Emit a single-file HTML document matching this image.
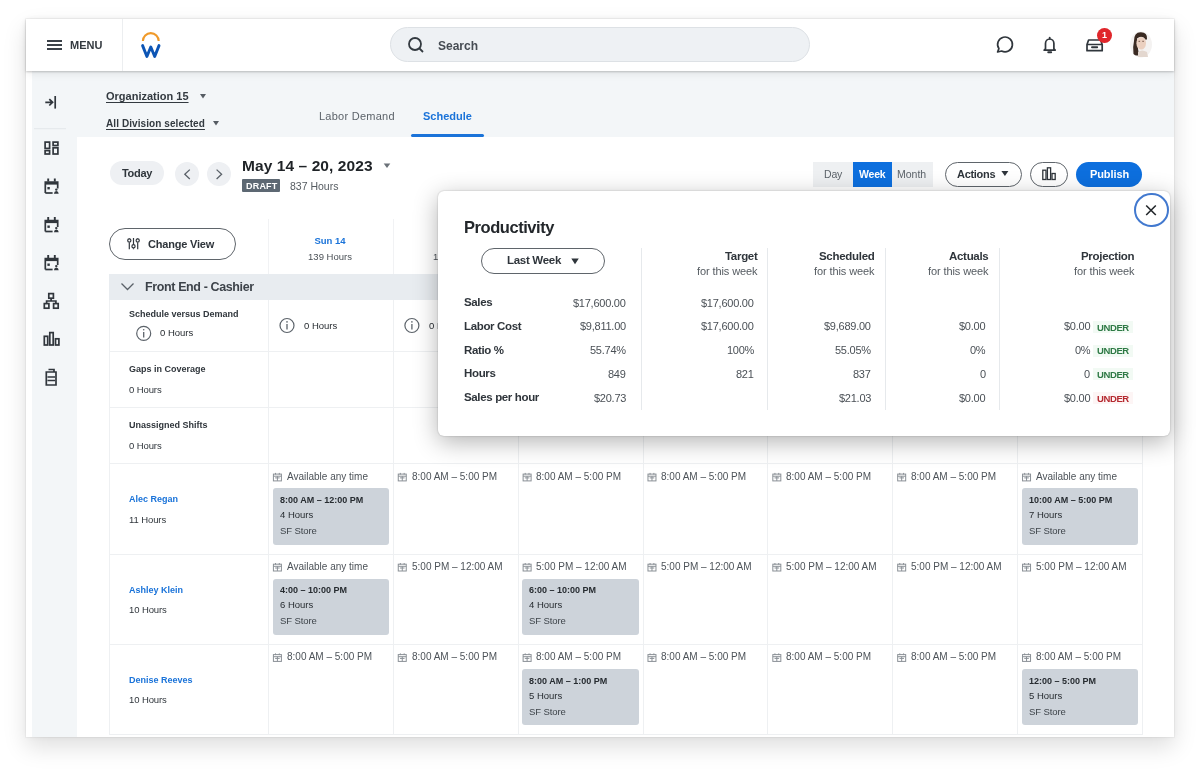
<!DOCTYPE html>
<html><head><meta charset="utf-8">
<style>
*{box-sizing:border-box;margin:0;padding:0}
html,body{width:1200px;height:770px;overflow:hidden;background:#fff;font-family:"Liberation Sans",sans-serif;color:#333}
.a{position:absolute}
.win{position:absolute;left:26px;top:19px;width:1148px;height:718px;background:#fff;box-shadow:0 0 0 1px rgba(0,0,0,0.03),0 10px 22px rgba(0,0,0,0.13),0 0 6px rgba(0,0,0,0.04)}
.t{position:absolute;white-space:nowrap;line-height:1;will-change:transform}
.b{font-weight:bold}
svg{position:absolute;overflow:visible}
</style></head><body>
<div class="win"></div>
<!-- sidebar / topbar backgrounds -->
<div class="a" style="left:32px;top:71px;width:1142px;height:66px;background:#f3f6f8"></div>
<div class="a" style="left:32px;top:71px;width:45px;height:666px;background:#f3f6f8"></div>
<!-- header -->
<div class="a" style="left:26px;top:19px;width:1148px;height:52px;background:#fff;box-shadow:0 1px 2px rgba(0,0,0,0.2),0 3px 8px rgba(0,0,0,0.07)"></div>
<div class="a" style="left:47px;top:40px;width:15px;height:2px;background:#3b4148"></div>
<div class="a" style="left:47px;top:44px;width:15px;height:2px;background:#3b4148"></div>
<div class="a" style="left:47px;top:48px;width:15px;height:2px;background:#3b4148"></div>
<div class="t b" style="left:70px;top:40px;font-size:11px;color:#343a40">MENU</div>
<div class="a" style="left:122px;top:19px;width:1px;height:52px;background:#eceef0"></div>
<svg style="left:0;top:0" width="1" height="1">
  <path d="M142.9 41 A7.9 7.9 0 0 1 158.7 41" fill="none" stroke="#f09a2a" stroke-width="2.1"/>
  <path d="M142.6 45.6 L146.9 56.5 L150.8 47 L154.7 56.5 L159 45.6" fill="none" stroke="#0d55b5" stroke-width="2.9" stroke-linejoin="round" stroke-linecap="round"/>
</svg>
<div class="a" style="left:390px;top:27px;width:420px;height:35px;border-radius:18px;background:#eef1f4;border:1px solid #dde1e5"></div>
<svg style="left:407px;top:36px" width="18" height="18" viewBox="0 0 18 18"><circle cx="8" cy="8" r="6" fill="none" stroke="#333a40" stroke-width="1.8"/><path d="M12.5 12.5 L16 16" stroke="#333a40" stroke-width="1.8"/></svg>
<div class="t b" style="left:438px;top:39.5px;font-size:12px;color:#464c53">Search</div>
<svg style="left:0;top:0" width="1" height="1" fill="none" stroke="#30363c" stroke-width="1.7" stroke-linejoin="round" stroke-linecap="round">
  <path d="M997.6 52 L998.9 48.6 A7.4 7.4 0 1 1 1001.6 51 Z"/>
  <path d="M1045.5 48.8 V43.5 A4.2 4.5 0 0 1 1053.9 43.5 V48.8 L1055.2 50.2 H1044.2 Z"/>
  <path d="M1049.7 37.5 V38.8"/><path d="M1048.2 52.2 H1051.2" stroke-width="1.9"/>
  <path d="M1087 44.5 L1088.6 40 H1100.6 L1102.2 44.5 V50.7 H1087 Z M1087 44.5 H1102.2"/>
  <path d="M1092 47.3 H1097.2" stroke-width="1.9"/>
</svg>
<div class="a" style="left:1097px;top:27.8px;width:14.8px;height:14.8px;border-radius:50%;background:#e0262b;color:#fff;font-size:9px;font-weight:bold;text-align:center;line-height:15px">1</div>
<svg style="left:0;top:0" width="1" height="1">
  <ellipse cx="1141" cy="44.5" rx="11" ry="13" fill="#f4f2f1"/>
  <path d="M1134 41 Q1134 32 1141 32.3 Q1147.5 32.5 1147 39 L1146 40 Q1142 34.5 1137 38.5 Q1137.5 48 1139 55 Q1136 56.5 1133.5 54 Q1132.5 47 1134 41 Z" fill="#3a2a22"/>
  <ellipse cx="1141.2" cy="43.2" rx="4.8" ry="6.3" fill="#ebd0c0"/>
  <path d="M1138.5 41.3 h1.6 M1142.3 41.3 h1.6" stroke="#6b4c3e" stroke-width="0.9"/>
  <path d="M1138 52 Q1142 49 1147 52 L1148 57 H1138 Z" fill="#e3d7cf"/>
</svg>
<!-- sidebar icons -->
<svg style="left:0;top:0" width="80" height="400" viewBox="0 0 80 400" fill="none" stroke="#30363c" stroke-width="1.7">
  <path d="M45.3 102.3 H52.3 M49.3 99.1 L52.6 102.3 L49.3 105.5"/>
  <path d="M55.2 96 V108.6"/>
  <path d="M34 128.7 H66" stroke="#e3e7eb" stroke-width="1"/>
  <rect x="45.1" y="142.1" width="4.5" height="6.3"/><rect x="45.1" y="150.6" width="4.5" height="3.4"/>
  <rect x="53.1" y="142.1" width="4.8" height="3.4"/><rect x="53.1" y="147.8" width="4.8" height="6.2"/>
  <g id="cal">
    <path d="M45.3 193 V182 H57.7 V188.6"/><rect x="45.3" y="182" width="12.4" height="2.6" fill="#30363c" stroke="none"/><path d="M48.2 178.6 V181.5 M54.8 178.6 V181.5" stroke-width="1.9"/>
    <path d="M45.3 193 H52.6"/>
    <rect x="47.4" y="187" width="2.4" height="2.4" fill="#30363c" stroke="none"/>
    <circle cx="56.3" cy="189.6" r="1.2" fill="#30363c" stroke="none"/>
    <path d="M53.9 193.8 Q54.2 191 56.3 191 Q58.4 191 58.7 193.8 Z" fill="#30363c" stroke="none"/>
  </g>
  <use href="#cal" y="38.5"/>
  <use href="#cal" y="76.5"/>
  <rect x="48.8" y="293.6" width="4.6" height="4.6"/><rect x="44.3" y="303.6" width="4.6" height="4.6"/><rect x="53.6" y="303.6" width="4.6" height="4.6"/>
  <path d="M51.1 298.2 V301 M46.6 303.6 V301 H55.9 V303.6"/>
  <rect x="44.3" y="336.3" width="3.4" height="8.7"/><rect x="49.8" y="332.6" width="3.4" height="12.4"/><rect x="55.5" y="338.8" width="3.4" height="6.2"/>
  <path d="M46.3 372 H56 V385 H46.3 Z M48.5 369.5 H54 V372 M47.5 377 H55 M47.5 380.5 H55"/>
</svg>

<!-- topbar -->
<div class="t b" style="left:106px;top:91px;font-size:11px;color:#333a40;text-decoration:underline;text-underline-offset:2px">Organization 15</div>
<svg style="left:200px;top:93.5px" width="8" height="6"><path d="M0 0 H6 L3 4.5 Z" fill="#555c63"/></svg>
<div class="t b" style="left:106px;top:119px;font-size:10px;color:#333a40;letter-spacing:0.08px;text-decoration:underline;text-underline-offset:2px">All Division selected</div>
<svg style="left:212.5px;top:121px" width="8" height="6"><path d="M0 0 H6 L3 4.5 Z" fill="#555c63"/></svg>
<div class="t" style="left:319px;top:111px;font-size:11px;color:#5c636a;letter-spacing:0.25px">Labor Demand</div>
<div class="t b" style="left:423px;top:111px;font-size:11px;color:#1a73d9">Schedule</div>
<div class="a" style="left:411px;top:134px;width:73px;height:3px;background:#1a73d9;border-radius:2px"></div>

<!-- content white -->
<div class="a" style="left:77px;top:137px;width:1097px;height:600px;background:#fff"></div>
<!-- GRID START -->
<div class="a" style="left:110px;top:161px;width:54px;height:24px;border-radius:12px;background:#eef0f3"></div>
<div class="t" style="top:167.9px;font-size:11px;color:#2f353b;font-weight:bold;letter-spacing:-0.3px;left:122.3px;">Today</div>
<div class="a" style="left:175.4px;top:162px;width:24px;height:24px;border-radius:50%;background:#eef0f3"></div>
<div class="a" style="left:207.3px;top:162px;width:24px;height:24px;border-radius:50%;background:#eef0f3"></div>
<svg style="left:0;top:0" width="1" height="1"><path d="M189.8 169.6 L184.8 174.3 L189.8 179" fill="none" stroke="#5a6168" stroke-width="1.3"/><path d="M216.6 169.6 L221.6 174.3 L216.6 179" fill="none" stroke="#5a6168" stroke-width="1.3"/></svg>
<div class="t" style="top:158.4px;font-size:15.5px;color:#1f2327;font-weight:bold;letter-spacing:0.08px;left:242.4px;">May 14 – 20, 2023</div>
<svg style="left:0;top:0" width="1" height="1"><path d="M383.7 163.5 H390.3 L387 168 Z" fill="#6b7178"/></svg>
<div class="a" style="left:242px;top:179px;width:38px;height:13px;background:#5d6873;border-radius:1px"></div>
<div class="t" style="top:181.9px;font-size:9px;color:#fff;font-weight:bold;letter-spacing:0.2px;left:245.5px;">DRAFT</div>
<div class="t" style="top:181.1px;font-size:10.5px;color:#555b61;letter-spacing:0px;left:289.5px;">837 Hours</div>
<div class="a" style="left:813px;top:161.5px;width:120px;height:25.5px;background:#eef0f2"></div>
<div class="a" style="left:852.5px;top:161.5px;width:39.5px;height:25.5px;background:#0d6fde"></div>
<div class="t" style="top:169.0px;font-size:10.5px;color:#5c636a;letter-spacing:-0.2px;left:823.7px;">Day</div>
<div class="t" style="top:169.0px;font-size:10.5px;color:#fff;font-weight:bold;letter-spacing:-0.2px;left:858.5px;">Week</div>
<div class="t" style="top:169.0px;font-size:10.5px;color:#5c636a;letter-spacing:0px;left:897.0px;">Month</div>
<div class="a" style="left:945px;top:161.5px;width:76.5px;height:25.5px;border-radius:13px;border:1.4px solid #5f656b;background:#fff"></div>
<div class="t" style="top:168.9px;font-size:11px;color:#2f353b;font-weight:bold;letter-spacing:-0.3px;left:957.4px;">Actions</div>
<svg style="left:0;top:0" width="1" height="1"><path d="M1001.4 171 H1008.4 L1004.9 176 Z" fill="#2f353b"/></svg>
<div class="a" style="left:1030px;top:161.5px;width:37.5px;height:25.5px;border-radius:13px;border:1.4px solid #5f656b;background:#fff"></div>
<svg style="left:0;top:0" width="1" height="1" fill="none" stroke="#2f353b" stroke-width="1.3"><rect x="1042.8" y="170.2" width="3.2" height="9.3"/><rect x="1047.4" y="167.8" width="3.2" height="11.7"/><rect x="1052" y="173.5" width="3.2" height="6"/></svg>
<div class="a" style="left:1076px;top:161.5px;width:66px;height:25.5px;border-radius:13px;background:#0d6fde"></div>
<div class="t" style="top:168.9px;font-size:11px;color:#fff;font-weight:bold;letter-spacing:-0.1px;left:1089.6px;">Publish</div>
<div class="a" style="left:108.5px;top:227.7px;width:127px;height:32px;border-radius:16px;border:1.4px solid #5f656b;background:#fff"></div>
<svg style="left:0;top:0" width="1" height="1" fill="none" stroke="#30363c" stroke-width="1.2"><path d="M129.3 238 V238.6 M129.3 242.3 V249.3 M133.5 238 V244.5 M133.5 248.2 V249.3 M137.7 238 V238.6 M137.7 242.3 V249.3"/><circle cx="129.3" cy="240.4" r="1.6"/><circle cx="133.5" cy="246.3" r="1.6"/><circle cx="137.7" cy="240.4" r="1.6"/></svg>
<div class="t" style="top:238.8px;font-size:11px;color:#2f353b;font-weight:bold;letter-spacing:-0.2px;left:148.2px;">Change View</div>
<div class="a" style="left:268.0px;top:219px;width:1px;height:55px;background:#f1f2f4"></div>
<div class="a" style="left:392.9px;top:219px;width:1px;height:55px;background:#f1f2f4"></div>
<div class="a" style="left:517.7px;top:219px;width:1px;height:55px;background:#f1f2f4"></div>
<div class="a" style="left:642.6px;top:219px;width:1px;height:55px;background:#f1f2f4"></div>
<div class="a" style="left:767.4px;top:219px;width:1px;height:55px;background:#f1f2f4"></div>
<div class="a" style="left:892.3px;top:219px;width:1px;height:55px;background:#f1f2f4"></div>
<div class="a" style="left:1017.1px;top:219px;width:1px;height:55px;background:#f1f2f4"></div>
<div class="a" style="left:1142.0px;top:219px;width:1px;height:55px;background:#f1f2f4"></div>
<div class="t" style="top:235.9px;font-size:9.5px;color:#1a73d9;font-weight:bold;left:180.0px;width:300px;text-align:center;">Sun 14</div>
<div class="t" style="top:252.3px;font-size:9.5px;color:#4a5056;left:180.0px;width:300px;text-align:center;">139 Hours</div>
<div class="t" style="top:235.9px;font-size:9.5px;color:#1a73d9;font-weight:bold;left:305.3px;width:300px;text-align:center;">Mon 15</div>
<div class="t" style="top:252.3px;font-size:9.5px;color:#4a5056;left:305.3px;width:300px;text-align:center;">139 Hours</div>
<div class="t" style="top:235.9px;font-size:9.5px;color:#1a73d9;font-weight:bold;left:430.1px;width:300px;text-align:center;">Tue 16</div>
<div class="t" style="top:252.3px;font-size:9.5px;color:#4a5056;left:430.1px;width:300px;text-align:center;">119 Hours</div>
<div class="t" style="top:235.9px;font-size:9.5px;color:#1a73d9;font-weight:bold;left:555.0px;width:300px;text-align:center;">Wed 17</div>
<div class="t" style="top:252.3px;font-size:9.5px;color:#4a5056;left:555.0px;width:300px;text-align:center;">119 Hours</div>
<div class="t" style="top:235.9px;font-size:9.5px;color:#1a73d9;font-weight:bold;left:679.8px;width:300px;text-align:center;">Thu 18</div>
<div class="t" style="top:252.3px;font-size:9.5px;color:#4a5056;left:679.8px;width:300px;text-align:center;">119 Hours</div>
<div class="t" style="top:235.9px;font-size:9.5px;color:#1a73d9;font-weight:bold;left:804.7px;width:300px;text-align:center;">Fri 19</div>
<div class="t" style="top:252.3px;font-size:9.5px;color:#4a5056;left:804.7px;width:300px;text-align:center;">119 Hours</div>
<div class="t" style="top:235.9px;font-size:9.5px;color:#1a73d9;font-weight:bold;left:929.5px;width:300px;text-align:center;">Sat 20</div>
<div class="t" style="top:252.3px;font-size:9.5px;color:#4a5056;left:929.5px;width:300px;text-align:center;">119 Hours</div>
<div class="a" style="left:109px;top:274.2px;width:1033px;height:26px;background:#e8ecf0"></div>
<svg style="left:0;top:0" width="1" height="1"><path d="M121.5 283.5 L127.5 289.5 L133.5 283.5" fill="none" stroke="#5a6168" stroke-width="1.3"/></svg>
<div class="t" style="top:280.9px;font-size:12.5px;color:#3d434a;font-weight:bold;letter-spacing:-0.38px;left:145.0px;">Front End - Cashier</div>
<div class="a" style="left:109.0px;top:299.8px;width:1px;height:434.5px;background:#eef0f2"></div>
<div class="a" style="left:268.0px;top:299.8px;width:1px;height:434.5px;background:#eef0f2"></div>
<div class="a" style="left:392.9px;top:299.8px;width:1px;height:434.5px;background:#eef0f2"></div>
<div class="a" style="left:517.7px;top:299.8px;width:1px;height:434.5px;background:#eef0f2"></div>
<div class="a" style="left:642.6px;top:299.8px;width:1px;height:434.5px;background:#eef0f2"></div>
<div class="a" style="left:767.4px;top:299.8px;width:1px;height:434.5px;background:#eef0f2"></div>
<div class="a" style="left:892.3px;top:299.8px;width:1px;height:434.5px;background:#eef0f2"></div>
<div class="a" style="left:1017.1px;top:299.8px;width:1px;height:434.5px;background:#eef0f2"></div>
<div class="a" style="left:1142.0px;top:299.8px;width:1px;height:434.5px;background:#eef0f2"></div>
<div class="a" style="left:109px;top:351.2px;width:1033.5px;height:1px;background:#eef0f2"></div>
<div class="a" style="left:109px;top:406.8px;width:1033.5px;height:1px;background:#eef0f2"></div>
<div class="a" style="left:109px;top:463.4px;width:1033.5px;height:1px;background:#eef0f2"></div>
<div class="a" style="left:109px;top:553.5px;width:1033.5px;height:1px;background:#eef0f2"></div>
<div class="a" style="left:109px;top:643.9px;width:1033.5px;height:1px;background:#eef0f2"></div>
<div class="a" style="left:109px;top:734.3px;width:1033.5px;height:1px;background:#eef0f2"></div>
<div class="t" style="top:310.4px;font-size:9px;color:#30363c;font-weight:bold;left:128.7px;">Schedule versus Demand</div>
<div class="t" style="top:328.3px;font-size:9.5px;color:#262b30;letter-spacing:0px;left:160.0px;">0 Hours</div>
<svg style="left:0;top:0" width="1" height="1"><circle cx="143.7" cy="333.4" r="7" fill="none" stroke="#5c636a" stroke-width="1.2"/><path d="M143.7 331.9 V337.4" stroke="#5c636a" stroke-width="1.3"/><circle cx="143.7" cy="329.79999999999995" r="0.8" fill="#5c636a"/></svg>
<svg style="left:0;top:0" width="1" height="1"><circle cx="287.0" cy="325.5" r="7" fill="none" stroke="#5c636a" stroke-width="1.2"/><path d="M287.0 324.0 V329.5" stroke="#5c636a" stroke-width="1.3"/><circle cx="287.0" cy="321.9" r="0.8" fill="#5c636a"/></svg>
<div class="t" style="top:320.5px;font-size:9.5px;color:#262b30;letter-spacing:0px;left:303.8px;">0 Hours</div>
<svg style="left:0;top:0" width="1" height="1"><circle cx="411.9" cy="325.5" r="7" fill="none" stroke="#5c636a" stroke-width="1.2"/><path d="M411.9 324.0 V329.5" stroke="#5c636a" stroke-width="1.3"/><circle cx="411.9" cy="321.9" r="0.8" fill="#5c636a"/></svg>
<div class="t" style="top:320.5px;font-size:9.5px;color:#262b30;letter-spacing:0px;left:428.7px;">0 Hours</div>
<svg style="left:0;top:0" width="1" height="1"><circle cx="536.7" cy="325.5" r="7" fill="none" stroke="#5c636a" stroke-width="1.2"/><path d="M536.7 324.0 V329.5" stroke="#5c636a" stroke-width="1.3"/><circle cx="536.7" cy="321.9" r="0.8" fill="#5c636a"/></svg>
<div class="t" style="top:320.5px;font-size:9.5px;color:#262b30;letter-spacing:0px;left:553.5px;">0 Hours</div>
<svg style="left:0;top:0" width="1" height="1"><circle cx="661.6" cy="325.5" r="7" fill="none" stroke="#5c636a" stroke-width="1.2"/><path d="M661.6 324.0 V329.5" stroke="#5c636a" stroke-width="1.3"/><circle cx="661.6" cy="321.9" r="0.8" fill="#5c636a"/></svg>
<div class="t" style="top:320.5px;font-size:9.5px;color:#262b30;letter-spacing:0px;left:678.4px;">0 Hours</div>
<svg style="left:0;top:0" width="1" height="1"><circle cx="786.4" cy="325.5" r="7" fill="none" stroke="#5c636a" stroke-width="1.2"/><path d="M786.4 324.0 V329.5" stroke="#5c636a" stroke-width="1.3"/><circle cx="786.4" cy="321.9" r="0.8" fill="#5c636a"/></svg>
<div class="t" style="top:320.5px;font-size:9.5px;color:#262b30;letter-spacing:0px;left:803.2px;">0 Hours</div>
<svg style="left:0;top:0" width="1" height="1"><circle cx="911.3" cy="325.5" r="7" fill="none" stroke="#5c636a" stroke-width="1.2"/><path d="M911.3 324.0 V329.5" stroke="#5c636a" stroke-width="1.3"/><circle cx="911.3" cy="321.9" r="0.8" fill="#5c636a"/></svg>
<div class="t" style="top:320.5px;font-size:9.5px;color:#262b30;letter-spacing:0px;left:928.1px;">0 Hours</div>
<svg style="left:0;top:0" width="1" height="1"><circle cx="1036.1" cy="325.5" r="7" fill="none" stroke="#5c636a" stroke-width="1.2"/><path d="M1036.1 324.0 V329.5" stroke="#5c636a" stroke-width="1.3"/><circle cx="1036.1" cy="321.9" r="0.8" fill="#5c636a"/></svg>
<div class="t" style="top:320.5px;font-size:9.5px;color:#262b30;letter-spacing:0px;left:1052.9px;">0 Hours</div>
<div class="t" style="top:365.4px;font-size:9px;color:#30363c;font-weight:bold;left:128.7px;">Gaps in Coverage</div>
<div class="t" style="top:384.8px;font-size:9.5px;color:#30363c;letter-spacing:-0.1px;left:128.7px;">0 Hours</div>
<div class="t" style="top:421.4px;font-size:9px;color:#30363c;font-weight:bold;left:128.7px;">Unassigned Shifts</div>
<div class="t" style="top:440.9px;font-size:9.5px;color:#30363c;letter-spacing:-0.1px;left:128.7px;">0 Hours</div>
<div class="t" style="top:495.4px;font-size:9px;color:#1a73d9;font-weight:bold;left:128.7px;">Alec Regan</div>
<div class="t" style="top:514.8px;font-size:9.5px;color:#30363c;letter-spacing:-0.1px;left:128.7px;">11 Hours</div>
<svg style="left:0;top:0" width="1" height="1" fill="none" stroke="#8a9096" stroke-width="1"><rect x="273.4" y="474.09999999999997" width="8" height="6.8"/><path d="M273.4 476.2 H281.4 M275.5 472.9 V474.59999999999997 M279.29999999999995 472.9 V474.59999999999997 M275.09999999999997 477.9 H279.7 M277.4 476.2 V480.9" /></svg>
<div class="t" style="top:471.8px;font-size:10px;color:#4d5359;letter-spacing:0px;left:286.6px;">Available any time</div>
<div class="a" style="left:272.5px;top:488.4px;width:116.5px;height:56.5px;background:#cdd3da;border-radius:3px"></div>
<div class="t" style="top:496.0px;font-size:9px;color:#262b30;font-weight:bold;letter-spacing:0px;left:279.6px;">8:00 AM – 12:00 PM</div>
<div class="t" style="top:510.2px;font-size:9.5px;color:#262b30;letter-spacing:0px;left:279.6px;">4 Hours</div>
<div class="t" style="top:526.0px;font-size:9.5px;color:#3e444a;letter-spacing:-0.1px;left:279.6px;">SF Store</div>
<svg style="left:0;top:0" width="1" height="1" fill="none" stroke="#8a9096" stroke-width="1"><rect x="398.25699999999995" y="474.09999999999997" width="8" height="6.8"/><path d="M398.25699999999995 476.2 H406.25699999999995 M400.35699999999997 472.9 V474.59999999999997 M404.1569999999999 472.9 V474.59999999999997 M399.95699999999994 477.9 H404.55699999999996 M402.25699999999995 476.2 V480.9" /></svg>
<div class="t" style="top:471.8px;font-size:10px;color:#4d5359;letter-spacing:0px;left:411.5px;">8:00 AM – 5:00 PM</div>
<svg style="left:0;top:0" width="1" height="1" fill="none" stroke="#8a9096" stroke-width="1"><rect x="523.1139999999999" y="474.09999999999997" width="8" height="6.8"/><path d="M523.1139999999999 476.2 H531.1139999999999 M525.2139999999999 472.9 V474.59999999999997 M529.0139999999999 472.9 V474.59999999999997 M524.814 477.9 H529.4139999999999 M527.1139999999999 476.2 V480.9" /></svg>
<div class="t" style="top:471.8px;font-size:10px;color:#4d5359;letter-spacing:0px;left:536.3px;">8:00 AM – 5:00 PM</div>
<svg style="left:0;top:0" width="1" height="1" fill="none" stroke="#8a9096" stroke-width="1"><rect x="647.971" y="474.09999999999997" width="8" height="6.8"/><path d="M647.971 476.2 H655.971 M650.071 472.9 V474.59999999999997 M653.871 472.9 V474.59999999999997 M649.671 477.9 H654.271 M651.971 476.2 V480.9" /></svg>
<div class="t" style="top:471.8px;font-size:10px;color:#4d5359;letter-spacing:0px;left:661.2px;">8:00 AM – 5:00 PM</div>
<svg style="left:0;top:0" width="1" height="1" fill="none" stroke="#8a9096" stroke-width="1"><rect x="772.828" y="474.09999999999997" width="8" height="6.8"/><path d="M772.828 476.2 H780.828 M774.928 472.9 V474.59999999999997 M778.728 472.9 V474.59999999999997 M774.528 477.9 H779.1279999999999 M776.828 476.2 V480.9" /></svg>
<div class="t" style="top:471.8px;font-size:10px;color:#4d5359;letter-spacing:0px;left:786.0px;">8:00 AM – 5:00 PM</div>
<svg style="left:0;top:0" width="1" height="1" fill="none" stroke="#8a9096" stroke-width="1"><rect x="897.685" y="474.09999999999997" width="8" height="6.8"/><path d="M897.685 476.2 H905.685 M899.785 472.9 V474.59999999999997 M903.5849999999999 472.9 V474.59999999999997 M899.385 477.9 H903.9849999999999 M901.685 476.2 V480.9" /></svg>
<div class="t" style="top:471.8px;font-size:10px;color:#4d5359;letter-spacing:0px;left:910.9px;">8:00 AM – 5:00 PM</div>
<svg style="left:0;top:0" width="1" height="1" fill="none" stroke="#8a9096" stroke-width="1"><rect x="1022.542" y="474.09999999999997" width="8" height="6.8"/><path d="M1022.542 476.2 H1030.542 M1024.642 472.9 V474.59999999999997 M1028.442 472.9 V474.59999999999997 M1024.242 477.9 H1028.842 M1026.542 476.2 V480.9" /></svg>
<div class="t" style="top:471.8px;font-size:10px;color:#4d5359;letter-spacing:0px;left:1035.7px;">Available any time</div>
<div class="a" style="left:1021.6px;top:488.4px;width:116.5px;height:56.5px;background:#cdd3da;border-radius:3px"></div>
<div class="t" style="top:496.0px;font-size:9px;color:#262b30;font-weight:bold;letter-spacing:0px;left:1028.7px;">10:00 AM – 5:00 PM</div>
<div class="t" style="top:510.2px;font-size:9.5px;color:#262b30;letter-spacing:0px;left:1028.7px;">7 Hours</div>
<div class="t" style="top:526.0px;font-size:9.5px;color:#3e444a;letter-spacing:-0.1px;left:1028.7px;">SF Store</div>
<div class="t" style="top:585.5px;font-size:9px;color:#1a73d9;font-weight:bold;left:128.7px;">Ashley Klein</div>
<div class="t" style="top:604.9px;font-size:9.5px;color:#30363c;letter-spacing:-0.1px;left:128.7px;">10 Hours</div>
<svg style="left:0;top:0" width="1" height="1" fill="none" stroke="#8a9096" stroke-width="1"><rect x="273.4" y="564.2" width="8" height="6.8"/><path d="M273.4 566.3000000000001 H281.4 M275.5 563.0 V564.7 M279.29999999999995 563.0 V564.7 M275.09999999999997 568.0 H279.7 M277.4 566.3000000000001 V571.0" /></svg>
<div class="t" style="top:561.9px;font-size:10px;color:#4d5359;letter-spacing:0px;left:286.6px;">Available any time</div>
<div class="a" style="left:272.5px;top:578.5px;width:116.5px;height:56.5px;background:#cdd3da;border-radius:3px"></div>
<div class="t" style="top:586.1px;font-size:9px;color:#262b30;font-weight:bold;letter-spacing:0px;left:279.6px;">4:00 – 10:00 PM</div>
<div class="t" style="top:600.3px;font-size:9.5px;color:#262b30;letter-spacing:0px;left:279.6px;">6 Hours</div>
<div class="t" style="top:616.1px;font-size:9.5px;color:#3e444a;letter-spacing:-0.1px;left:279.6px;">SF Store</div>
<svg style="left:0;top:0" width="1" height="1" fill="none" stroke="#8a9096" stroke-width="1"><rect x="398.25699999999995" y="564.2" width="8" height="6.8"/><path d="M398.25699999999995 566.3000000000001 H406.25699999999995 M400.35699999999997 563.0 V564.7 M404.1569999999999 563.0 V564.7 M399.95699999999994 568.0 H404.55699999999996 M402.25699999999995 566.3000000000001 V571.0" /></svg>
<div class="t" style="top:561.9px;font-size:10px;color:#4d5359;letter-spacing:0px;left:411.5px;">5:00 PM – 12:00 AM</div>
<svg style="left:0;top:0" width="1" height="1" fill="none" stroke="#8a9096" stroke-width="1"><rect x="523.1139999999999" y="564.2" width="8" height="6.8"/><path d="M523.1139999999999 566.3000000000001 H531.1139999999999 M525.2139999999999 563.0 V564.7 M529.0139999999999 563.0 V564.7 M524.814 568.0 H529.4139999999999 M527.1139999999999 566.3000000000001 V571.0" /></svg>
<div class="t" style="top:561.9px;font-size:10px;color:#4d5359;letter-spacing:0px;left:536.3px;">5:00 PM – 12:00 AM</div>
<div class="a" style="left:522.2px;top:578.5px;width:116.5px;height:56.5px;background:#cdd3da;border-radius:3px"></div>
<div class="t" style="top:586.1px;font-size:9px;color:#262b30;font-weight:bold;letter-spacing:0px;left:529.3px;">6:00 – 10:00 PM</div>
<div class="t" style="top:600.3px;font-size:9.5px;color:#262b30;letter-spacing:0px;left:529.3px;">4 Hours</div>
<div class="t" style="top:616.1px;font-size:9.5px;color:#3e444a;letter-spacing:-0.1px;left:529.3px;">SF Store</div>
<svg style="left:0;top:0" width="1" height="1" fill="none" stroke="#8a9096" stroke-width="1"><rect x="647.971" y="564.2" width="8" height="6.8"/><path d="M647.971 566.3000000000001 H655.971 M650.071 563.0 V564.7 M653.871 563.0 V564.7 M649.671 568.0 H654.271 M651.971 566.3000000000001 V571.0" /></svg>
<div class="t" style="top:561.9px;font-size:10px;color:#4d5359;letter-spacing:0px;left:661.2px;">5:00 PM – 12:00 AM</div>
<svg style="left:0;top:0" width="1" height="1" fill="none" stroke="#8a9096" stroke-width="1"><rect x="772.828" y="564.2" width="8" height="6.8"/><path d="M772.828 566.3000000000001 H780.828 M774.928 563.0 V564.7 M778.728 563.0 V564.7 M774.528 568.0 H779.1279999999999 M776.828 566.3000000000001 V571.0" /></svg>
<div class="t" style="top:561.9px;font-size:10px;color:#4d5359;letter-spacing:0px;left:786.0px;">5:00 PM – 12:00 AM</div>
<svg style="left:0;top:0" width="1" height="1" fill="none" stroke="#8a9096" stroke-width="1"><rect x="897.685" y="564.2" width="8" height="6.8"/><path d="M897.685 566.3000000000001 H905.685 M899.785 563.0 V564.7 M903.5849999999999 563.0 V564.7 M899.385 568.0 H903.9849999999999 M901.685 566.3000000000001 V571.0" /></svg>
<div class="t" style="top:561.9px;font-size:10px;color:#4d5359;letter-spacing:0px;left:910.9px;">5:00 PM – 12:00 AM</div>
<svg style="left:0;top:0" width="1" height="1" fill="none" stroke="#8a9096" stroke-width="1"><rect x="1022.542" y="564.2" width="8" height="6.8"/><path d="M1022.542 566.3000000000001 H1030.542 M1024.642 563.0 V564.7 M1028.442 563.0 V564.7 M1024.242 568.0 H1028.842 M1026.542 566.3000000000001 V571.0" /></svg>
<div class="t" style="top:561.9px;font-size:10px;color:#4d5359;letter-spacing:0px;left:1035.7px;">5:00 PM – 12:00 AM</div>
<div class="t" style="top:675.9px;font-size:9px;color:#1a73d9;font-weight:bold;left:128.7px;">Denise Reeves</div>
<div class="t" style="top:695.3px;font-size:9.5px;color:#30363c;letter-spacing:-0.1px;left:128.7px;">10 Hours</div>
<svg style="left:0;top:0" width="1" height="1" fill="none" stroke="#8a9096" stroke-width="1"><rect x="273.4" y="654.6" width="8" height="6.8"/><path d="M273.4 656.7 H281.4 M275.5 653.4 V655.1 M279.29999999999995 653.4 V655.1 M275.09999999999997 658.4 H279.7 M277.4 656.7 V661.4" /></svg>
<div class="t" style="top:652.3px;font-size:10px;color:#4d5359;letter-spacing:0px;left:286.6px;">8:00 AM – 5:00 PM</div>
<svg style="left:0;top:0" width="1" height="1" fill="none" stroke="#8a9096" stroke-width="1"><rect x="398.25699999999995" y="654.6" width="8" height="6.8"/><path d="M398.25699999999995 656.7 H406.25699999999995 M400.35699999999997 653.4 V655.1 M404.1569999999999 653.4 V655.1 M399.95699999999994 658.4 H404.55699999999996 M402.25699999999995 656.7 V661.4" /></svg>
<div class="t" style="top:652.3px;font-size:10px;color:#4d5359;letter-spacing:0px;left:411.5px;">8:00 AM – 5:00 PM</div>
<svg style="left:0;top:0" width="1" height="1" fill="none" stroke="#8a9096" stroke-width="1"><rect x="523.1139999999999" y="654.6" width="8" height="6.8"/><path d="M523.1139999999999 656.7 H531.1139999999999 M525.2139999999999 653.4 V655.1 M529.0139999999999 653.4 V655.1 M524.814 658.4 H529.4139999999999 M527.1139999999999 656.7 V661.4" /></svg>
<div class="t" style="top:652.3px;font-size:10px;color:#4d5359;letter-spacing:0px;left:536.3px;">8:00 AM – 5:00 PM</div>
<div class="a" style="left:522.2px;top:668.9px;width:116.5px;height:56.5px;background:#cdd3da;border-radius:3px"></div>
<div class="t" style="top:676.5px;font-size:9px;color:#262b30;font-weight:bold;letter-spacing:0px;left:529.3px;">8:00 AM – 1:00 PM</div>
<div class="t" style="top:690.7px;font-size:9.5px;color:#262b30;letter-spacing:0px;left:529.3px;">5 Hours</div>
<div class="t" style="top:706.5px;font-size:9.5px;color:#3e444a;letter-spacing:-0.1px;left:529.3px;">SF Store</div>
<svg style="left:0;top:0" width="1" height="1" fill="none" stroke="#8a9096" stroke-width="1"><rect x="647.971" y="654.6" width="8" height="6.8"/><path d="M647.971 656.7 H655.971 M650.071 653.4 V655.1 M653.871 653.4 V655.1 M649.671 658.4 H654.271 M651.971 656.7 V661.4" /></svg>
<div class="t" style="top:652.3px;font-size:10px;color:#4d5359;letter-spacing:0px;left:661.2px;">8:00 AM – 5:00 PM</div>
<svg style="left:0;top:0" width="1" height="1" fill="none" stroke="#8a9096" stroke-width="1"><rect x="772.828" y="654.6" width="8" height="6.8"/><path d="M772.828 656.7 H780.828 M774.928 653.4 V655.1 M778.728 653.4 V655.1 M774.528 658.4 H779.1279999999999 M776.828 656.7 V661.4" /></svg>
<div class="t" style="top:652.3px;font-size:10px;color:#4d5359;letter-spacing:0px;left:786.0px;">8:00 AM – 5:00 PM</div>
<svg style="left:0;top:0" width="1" height="1" fill="none" stroke="#8a9096" stroke-width="1"><rect x="897.685" y="654.6" width="8" height="6.8"/><path d="M897.685 656.7 H905.685 M899.785 653.4 V655.1 M903.5849999999999 653.4 V655.1 M899.385 658.4 H903.9849999999999 M901.685 656.7 V661.4" /></svg>
<div class="t" style="top:652.3px;font-size:10px;color:#4d5359;letter-spacing:0px;left:910.9px;">8:00 AM – 5:00 PM</div>
<svg style="left:0;top:0" width="1" height="1" fill="none" stroke="#8a9096" stroke-width="1"><rect x="1022.542" y="654.6" width="8" height="6.8"/><path d="M1022.542 656.7 H1030.542 M1024.642 653.4 V655.1 M1028.442 653.4 V655.1 M1024.242 658.4 H1028.842 M1026.542 656.7 V661.4" /></svg>
<div class="t" style="top:652.3px;font-size:10px;color:#4d5359;letter-spacing:0px;left:1035.7px;">8:00 AM – 5:00 PM</div>
<div class="a" style="left:1021.6px;top:668.9px;width:116.5px;height:56.5px;background:#cdd3da;border-radius:3px"></div>
<div class="t" style="top:676.5px;font-size:9px;color:#262b30;font-weight:bold;letter-spacing:0px;left:1028.7px;">12:00 – 5:00 PM</div>
<div class="t" style="top:690.7px;font-size:9.5px;color:#262b30;letter-spacing:0px;left:1028.7px;">5 Hours</div>
<div class="t" style="top:706.5px;font-size:9.5px;color:#3e444a;letter-spacing:-0.1px;left:1028.7px;">SF Store</div>
<!-- POPUP START -->
<div class="a" style="left:438.2px;top:190.5px;width:731.8px;height:245.5px;background:#fff;border-radius:6px;box-shadow:0 6px 24px rgba(0,0,0,0.30),0 0 2px rgba(0,0,0,0.25)"></div>
<div class="t" style="top:218.9px;font-size:16.5px;color:#23272b;font-weight:bold;letter-spacing:-0.45px;left:464.1px;">Productivity</div>
<div class="a" style="left:1134px;top:192.7px;width:34.5px;height:34.5px;border-radius:50%;border:2px solid #4279cf"></div>
<svg style="left:0;top:0" width="1" height="1"><path d="M1146.2 205.5 L1155.8 215 M1155.8 205.5 L1146.2 215" stroke="#23272b" stroke-width="1.6"/></svg>
<div class="a" style="left:480.8px;top:248.3px;width:124.6px;height:25.8px;border-radius:13px;border:1.4px solid #5f656b"></div>
<div class="t" style="top:255.4px;font-size:11.5px;color:#2f353b;font-weight:bold;letter-spacing:-0.3px;left:507.2px;">Last Week</div>
<svg style="left:0;top:0" width="1" height="1"><path d="M571.3 258.4 H578.8 L575 264.2 Z" fill="#2f353b"/></svg>
<div class="a" style="left:640.5px;top:248px;width:1px;height:162px;background:#e6e9ec"></div>
<div class="a" style="left:767.2px;top:248px;width:1px;height:162px;background:#e6e9ec"></div>
<div class="a" style="left:884.5px;top:248px;width:1px;height:162px;background:#e6e9ec"></div>
<div class="a" style="left:998.8px;top:248px;width:1px;height:162px;background:#e6e9ec"></div>
<div class="t" style="top:250.9px;font-size:11.5px;color:#2f353b;font-weight:bold;letter-spacing:-0.3px;right:442.8px;">Target</div>
<div class="t" style="top:266.4px;font-size:11px;color:#555b61;letter-spacing:-0.1px;right:442.8px;">for this week</div>
<div class="t" style="top:250.9px;font-size:11.5px;color:#2f353b;font-weight:bold;letter-spacing:-0.3px;right:325.7px;">Scheduled</div>
<div class="t" style="top:266.4px;font-size:11px;color:#555b61;letter-spacing:-0.1px;right:325.7px;">for this week</div>
<div class="t" style="top:250.9px;font-size:11.5px;color:#2f353b;font-weight:bold;letter-spacing:-0.3px;right:211.7px;">Actuals</div>
<div class="t" style="top:266.4px;font-size:11px;color:#555b61;letter-spacing:-0.1px;right:211.7px;">for this week</div>
<div class="t" style="top:250.9px;font-size:11.5px;color:#2f353b;font-weight:bold;letter-spacing:-0.3px;right:65.7px;">Projection</div>
<div class="t" style="top:266.4px;font-size:11px;color:#555b61;letter-spacing:-0.1px;right:65.7px;">for this week</div>
<div class="t" style="top:297.1px;font-size:11.5px;color:#2f353b;font-weight:bold;letter-spacing:-0.35px;left:463.8px;">Sales</div>
<div class="t" style="top:297.5px;font-size:11px;color:#4a5056;letter-spacing:-0.25px;right:574.0px;">$17,600.00</div>
<div class="t" style="top:297.5px;font-size:11px;color:#4a5056;letter-spacing:-0.25px;right:446.0px;">$17,600.00</div>
<div class="t" style="top:320.9px;font-size:11.5px;color:#2f353b;font-weight:bold;letter-spacing:-0.35px;left:463.8px;">Labor Cost</div>
<div class="t" style="top:321.3px;font-size:11px;color:#4a5056;letter-spacing:-0.25px;right:574.0px;">$9,811.00</div>
<div class="t" style="top:321.3px;font-size:11px;color:#4a5056;letter-spacing:-0.25px;right:446.0px;">$17,600.00</div>
<div class="t" style="top:321.3px;font-size:11px;color:#4a5056;letter-spacing:-0.25px;right:329.0px;">$9,689.00</div>
<div class="t" style="top:321.3px;font-size:11px;color:#4a5056;letter-spacing:-0.25px;right:214.3px;">$0.00</div>
<div class="t" style="top:321.3px;font-size:11px;color:#4a5056;letter-spacing:-0.25px;right:109.7px;">$0.00</div>
<div class="a" style="left:1093px;top:321.1px;width:40px;height:11.7px;background:#f2faf4"></div>
<div class="t" style="top:322.6px;font-size:9.5px;color:#2e7a45;font-weight:bold;letter-spacing:-0.4px;left:1096.6px;">UNDER</div>
<div class="t" style="top:344.7px;font-size:11.5px;color:#2f353b;font-weight:bold;letter-spacing:-0.35px;left:463.8px;">Ratio %</div>
<div class="t" style="top:345.1px;font-size:11px;color:#4a5056;letter-spacing:-0.25px;right:574.0px;">55.74%</div>
<div class="t" style="top:345.1px;font-size:11px;color:#4a5056;letter-spacing:-0.25px;right:446.0px;">100%</div>
<div class="t" style="top:345.1px;font-size:11px;color:#4a5056;letter-spacing:-0.25px;right:329.0px;">55.05%</div>
<div class="t" style="top:345.1px;font-size:11px;color:#4a5056;letter-spacing:-0.25px;right:214.3px;">0%</div>
<div class="t" style="top:345.1px;font-size:11px;color:#4a5056;letter-spacing:-0.25px;right:109.7px;">0%</div>
<div class="a" style="left:1093px;top:344.9px;width:40px;height:11.7px;background:#f2faf4"></div>
<div class="t" style="top:346.4px;font-size:9.5px;color:#2e7a45;font-weight:bold;letter-spacing:-0.4px;left:1096.6px;">UNDER</div>
<div class="t" style="top:368.2px;font-size:11.5px;color:#2f353b;font-weight:bold;letter-spacing:-0.35px;left:463.8px;">Hours</div>
<div class="t" style="top:368.6px;font-size:11px;color:#4a5056;letter-spacing:-0.25px;right:574.0px;">849</div>
<div class="t" style="top:368.6px;font-size:11px;color:#4a5056;letter-spacing:-0.25px;right:446.0px;">821</div>
<div class="t" style="top:368.6px;font-size:11px;color:#4a5056;letter-spacing:-0.25px;right:329.0px;">837</div>
<div class="t" style="top:368.6px;font-size:11px;color:#4a5056;letter-spacing:-0.25px;right:214.3px;">0</div>
<div class="t" style="top:368.6px;font-size:11px;color:#4a5056;letter-spacing:-0.25px;right:109.7px;">0</div>
<div class="a" style="left:1093px;top:368.4px;width:40px;height:11.7px;background:#f2faf4"></div>
<div class="t" style="top:369.9px;font-size:9.5px;color:#2e7a45;font-weight:bold;letter-spacing:-0.4px;left:1096.6px;">UNDER</div>
<div class="t" style="top:392.2px;font-size:11.5px;color:#2f353b;font-weight:bold;letter-spacing:-0.35px;left:463.8px;">Sales per hour</div>
<div class="t" style="top:392.6px;font-size:11px;color:#4a5056;letter-spacing:-0.25px;right:574.0px;">$20.73</div>
<div class="t" style="top:392.6px;font-size:11px;color:#4a5056;letter-spacing:-0.25px;right:329.0px;">$21.03</div>
<div class="t" style="top:392.6px;font-size:11px;color:#4a5056;letter-spacing:-0.25px;right:214.3px;">$0.00</div>
<div class="t" style="top:392.6px;font-size:11px;color:#4a5056;letter-spacing:-0.25px;right:109.7px;">$0.00</div>
<div class="a" style="left:1093px;top:392.4px;width:40px;height:11.7px;background:#fdf5f5"></div>
<div class="t" style="top:393.9px;font-size:9.5px;color:#b5292f;font-weight:bold;letter-spacing:-0.4px;left:1096.6px;">UNDER</div>
</body></html>
